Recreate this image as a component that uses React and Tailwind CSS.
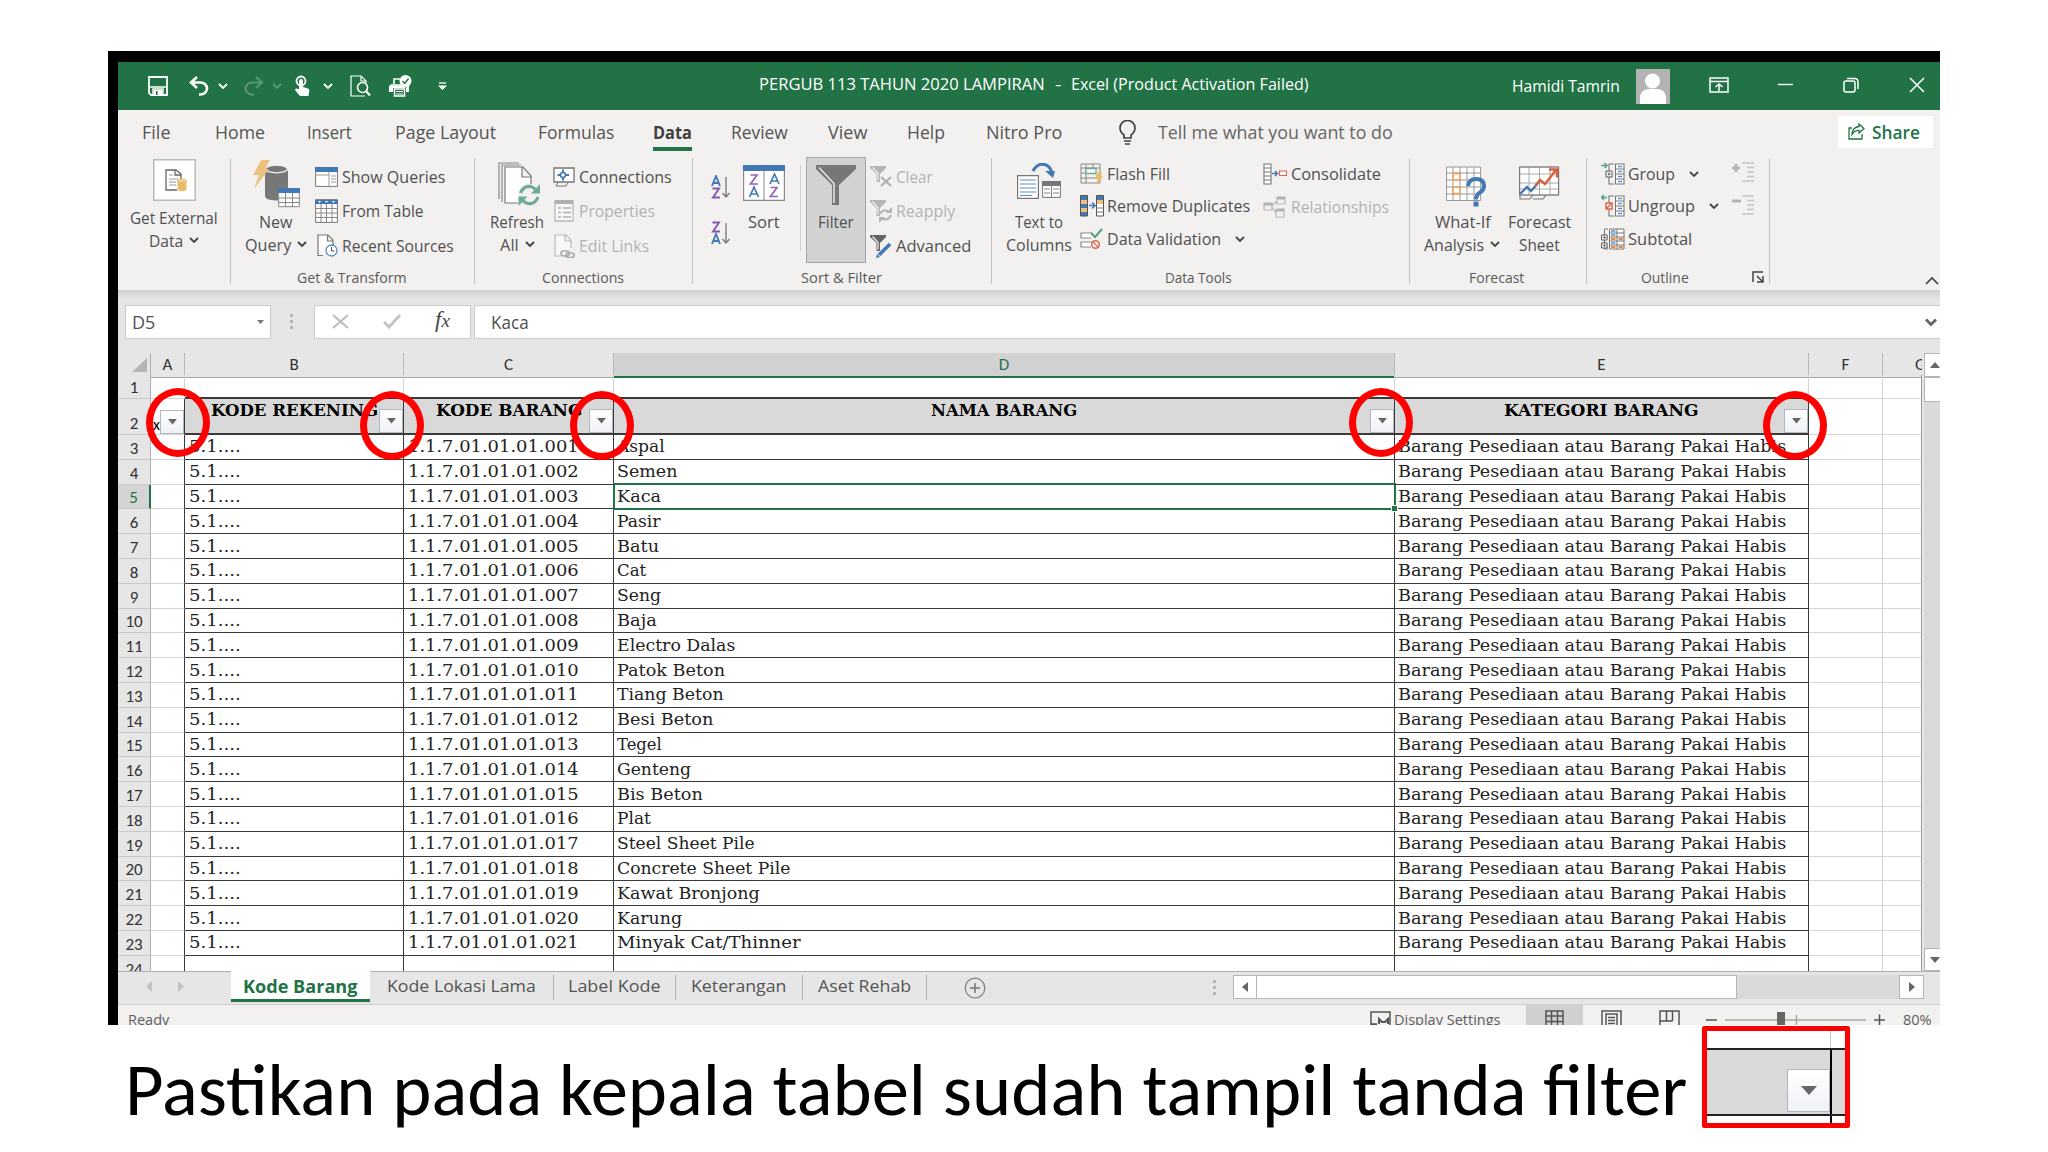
import { useLayoutEffect, useRef, useState } from "react";
import clsx from "clsx";

// Text squeezed or stretched to a fixed width
const Txt = ({ w, className, children }) => {
  const ref = useRef(null);
  const [scale, setScale] = useState(1);

  useLayoutEffect(() => {
    setScale(w / ref.current.offsetWidth);
  }, [w]);

  return (
    <span className={clsx("block shrink-0", className)} style={{ width: w }}>
      <span
        ref={ref}
        className="inline-block origin-left whitespace-nowrap align-top"
        style={{ transform: `scaleX(${scale})` }}
      >
        {children}
      </span>
    </span>
  );
};

const Svg = ({ w, h, className, children }) => (
  <svg
    width={w}
    height={h}
    viewBox={`0 0 ${w} ${h}`}
    fill="none"
    className={clsx("block shrink-0", className)}
  >
    {children}
  </svg>
);

const Chevron = ({ className, color = "#444" }) => (
  <Svg w={10} h={8} className={className}>
    <path d="M1 2l4 4 4-4" stroke={color} strokeWidth="1.8" />
  </Svg>
);

const SaveIcon = () => (
  <Svg w={20} h={20} className="ml-[30px]">
    <path d="M1 1h18v18H3l-2-2z" stroke="#fff" strokeWidth="1.8" />
    <path d="M2 11h16M5 19v-6h10v6" stroke="#fff" strokeWidth="1.500" />
    <path d="M6 14h8v5H6z" fill="#fff" />
    <path d="M8 15h1.600v4H8z" fill="#217346" />
  </Svg>
);

const UndoIcon = () => (
  <Svg w={21} h={20} className="ml-[21px]">
    <path d="M8 1L2 6.500l6 5.500M2 6.500h9.500a6.500 6 0 0 1 0 12H10" stroke="#fff" strokeWidth="2.600" />
  </Svg>
);

const RedoIcon = () => (
  <Svg w={21} h={20} className="ml-[15px] opacity-25">
    <path d="M13 1l6 5.500-6 5.500M19 6.500H9.500a7 6 0 0 0 0 12H11" stroke="#fff" strokeWidth="2.200" />
  </Svg>
);

const TouchIcon = () => (
  <Svg w={16} h={22} className="ml-[12px]">
    <circle cx="7" cy="6" r="4.500" stroke="#fff" strokeWidth="1.800" />
    <path d="M5 6a2 2 0 0 1 4 0v6l5 1.500q1.500.5 1.300 2L14.500 21H6l-5-6q0-2 2-1.500l2 1z" fill="#fff" />
  </Svg>
);

const PreviewIcon = () => (
  <Svg w={21} h={22} className="ml-[17px]">
    <path d="M15 21H1V1h10l5 5v2M11 1v5h5" stroke="#fff" strokeWidth="1.200" />
    <circle cx="12.500" cy="12.500" r="5" stroke="#fff" strokeWidth="1.600" />
    <path d="M16 16l4 4.500" stroke="#fff" strokeWidth="2.200" />
  </Svg>
);

const PrintIcon = () => (
  <Svg w={23} h={22} className="ml-[18px]">
    <path d="M5 9V4h6M1.500 10h11.500" stroke="#fff" strokeWidth="1.600" />
    <path d="M0 10.500h20V17h-3v-4H4v4H0z" fill="#fff" />
    <path d="M16 12h2" stroke="#217346" />
    <path d="M5.500 14h10v7h-10z" stroke="#fff" strokeWidth="1.500" />
    <path d="M7 16.500h7M7 19h7" stroke="#fff" />
    <circle cx="16.500" cy="6" r="6" fill="#fff" />
    <path d="M13.500 6l2.300 2.500L19.500 3.500" stroke="#217346" strokeWidth="1.400" />
  </Svg>
);

const TitleBar = () => (
  <div className="flex h-12 shrink-0 items-center bg-[#217346] text-[16.500px] text-white">
    <div className="flex w-[641px] items-center">
      <SaveIcon />
      <UndoIcon />
      <Chevron color="#fff" className="ml-2" />
      <RedoIcon />
      <Chevron color="#5c9a78" className="ml-2" />
      <TouchIcon />
      <Chevron color="#fff" className="ml-[13px]" />
      <PreviewIcon />
      <PrintIcon />
      <Svg w={9} h={8} className="ml-[26px]">
        <path d="M1 1h7" stroke="#fff" strokeWidth="1.300" />
        <path d="M0 3.500h9L4.500 8z" fill="#fff" />
      </Svg>
    </div>
    <Txt w={286} className="-mt-1">PERGUB 113 TAHUN 2020 LAMPIRAN</Txt>
    <Txt w={6} className="-mt-1 ml-[10px]">-</Txt>
    <Txt w={238} className="-mt-1 ml-[10px]">Excel (Product Activation Failed)</Txt>
    <Txt w={108} className="ml-[203px]">Hamidi Tamrin</Txt>
    <Svg w={34} h={35} className="ml-4">
      <path d="M0 0h34v35H0z" fill="#b3b3b3" />
      <circle cx="16.500" cy="12" r="7.500" fill="#fff" />
      <path d="M4 35v-5q0-10 9-10h8q9 0 9 10v5z" fill="#fff" />
    </Svg>
    <Svg w={20} h={16} className="-mt-0.5 ml-[39px]">
      <path d="M1 1h18v14H1zM1 4.500h18M10 14V7M6.500 10L10 7l3.500 3" stroke="#fff" strokeWidth="1.500" />
    </Svg>
    <Svg w={15} h={16} className="-mt-0.5 ml-[49px]">
      <path d="M0 7.500h15" stroke="#fff" strokeWidth="1.400" />
    </Svg>
    <Svg w={16} h={16} className="-mt-0.5 ml-[50px]">
      <rect x="1" y="4" width="11" height="11" rx="2" stroke="#fff" strokeWidth="1.500" />
      <path d="M4 1.500h7.500q3.500 0 3.500 3.500v7" stroke="#fff" strokeWidth="1.500" />
    </Svg>
    <Svg w={16} h={16} className="-mt-0.5 ml-[50px]">
      <path d="M1 1l14 14M15 1L1 15" stroke="#fff" strokeWidth="1.500" />
    </Svg>
  </div>
);

const tabs = [
  { name: "File", w: 29, ml: "ml-6" },
  { name: "Home", w: 50, ml: "ml-[44px]" },
  { name: "Insert", w: 45, ml: "ml-[42px]" },
  { name: "Page Layout", w: 101, ml: "ml-[43px]" },
  { name: "Formulas", w: 76, ml: "ml-[42px]" },
  { name: "Data", w: 39, ml: "ml-[39px]", active: true },
  { name: "Review", w: 57, ml: "ml-[39px]" },
  { name: "View", w: 39, ml: "ml-[40px]" },
  { name: "Help", w: 38, ml: "ml-10" },
  { name: "Nitro Pro", w: 76, ml: "ml-[41px]" },
];

const TabBar = () => (
  <div className="flex h-[45px] items-center text-[18px] text-[#555]">
    {tabs.map((tab) => (
      <div
        key={tab.name}
        className={clsx(
          "flex h-[36px] items-center border-b-4 pt-[3px]",
          tab.ml,
          tab.active ? "border-[#217346] font-bold text-[#3f3f3f]" : "border-transparent"
        )}
      >
        <Txt w={tab.w}>{tab.name}</Txt>
      </div>
    ))}
    <Svg w={17} h={25} className="ml-[57px]">
      <path d="M5 18v-3Q1 12 1 8a7.500 7.500 0 0 1 15 0q0 4-4 7v3zM5 21h7" stroke="#444" strokeWidth="1.700" />
      <path d="M6 24h5" stroke="#444" strokeWidth="1.500" />
    </Svg>
    <Txt w={235} className="ml-[22px] text-[#666]">Tell me what you want to do</Txt>
    <div className="-mt-0.5 ml-auto mr-[7px] flex h-8 w-[95px] items-center bg-white pl-[10px]">
      <Svg w={17} h={17}>
        <path d="M4 5H1v11h13v-5M11 1l5 4.500-5 4.500V7.500Q7 7 4 11.500 4.500 4 11 3.500z" stroke="#217346" strokeWidth="1.300" />
      </Svg>
      <Txt w={48} className="ml-[7px] pt-0.5 font-semibold text-[#217346]">Share</Txt>
    </div>
  </div>
);

const Group = ({ label, labelW, width, pad, children }) => (
  <div className={clsx("flex h-[126px] shrink-0 flex-col border-r border-[#c4c3c2]", width)}>
    <div className="flex h-[110px] shrink-0 items-start">{children}</div>
    {label && (
      <div className={clsx("flex h-5 shrink-0 items-center text-[14.500px] text-[#5a5a5a]", pad)}>
        <Txt w={labelW}>{label}</Txt>
      </div>
    )}
  </div>
);

// Row of the ribbon: a small icon with a caption
const Item = ({ icon, w, gap = "ml-1", chevron, disabled, children }) => (
  <div className={clsx("flex h-full items-center", disabled && "text-[#b4b3b2]")}>
    {icon}
    <Txt w={w} className={gap}>{children}</Txt>
    {chevron && <Chevron className={chevron} />}
  </div>
);

const Line = ({ w, chevron, className, children }) => (
  <div className={clsx("flex h-6 items-center", className)}>
    <Txt w={w}>{children}</Txt>
    {chevron && <Chevron className="-mt-0.5 ml-[6px]" />}
  </div>
);

const ExternalDataIcon = () => (
  <Svg w={43} h={42} className="ml-[35px] mt-px">
    <path d="M.8.8h41.400v40.400H.8z" fill="#fff" stroke="#bbb" strokeWidth="1.500" />
    <path d="M28 20v-5l-5-4H13v20h11M22 11v5h6" stroke="#666" strokeWidth="1.300" />
    <path d="M16 16h4M16 20h9M16 23h7M16 26h7" stroke="#999" />
    <path d="M24.500 21.500h9V31q-4.500 2.500-9 0z" fill="#e9bd6c" />
    <ellipse cx="29" cy="22" rx="4.500" ry="1.800" fill="#f2d59c" stroke="#e0ac50" strokeWidth=".8" />
  </Svg>
);

const NewQueryIcon = () => (
  <Svg w={47} h={48} className="ml-[22px] mt-0.5">
    <path d="M12 9v27q0 4 11 4.500h2V28h10V9z" fill="#777" />
    <ellipse cx="23.500" cy="9" rx="11" ry="3.800" fill="#777" stroke="#f2f1f0" strokeWidth="1.200" />
    <path d="M8 0h9l-5 9h4L1 29l5-14H0z" fill="#ecc17d" />
    <path d="M25.700 28.700h20.600v18H25.700z" fill="#fff" stroke="#888" />
    <path d="M25 28h22v5H25z" fill="#4279b5" />
    <path d="M25 38h22M25 42.500h22M32.500 33v14M39.500 33v14" stroke="#888" />
  </Svg>
);

const ShowQueriesIcon = () => (
  <Svg w={23} h={20}>
    <path d="M.6.600h21.800v18.800H.6z" fill="#fff" stroke="#777" />
    <path d="M0 0h23v5H0z" fill="#4279b5" />
    <path d="M0 8h14M14 5v14M16 9h5M16 12h5M16 15h5" stroke="#999" />
  </Svg>
);

const TableIcon = () => (
  <Svg w={23} h={24}>
    <path d="M.6.600h21.800v22.800H.6z" fill="#fff" stroke="#777" />
    <path d="M0 1h23v4H0z" fill="#4279b5" />
    <path d="M0 9.500h23M0 14h23M0 18.500h23M6 5v18M11.500 5v18M17 5v18" stroke="#888" />
    <path d="M3 2l1.500 2L6 2zM10 2l1.500 2L13 2zM17 2l1.500 2L20 2z" fill="#fff" />
  </Svg>
);

const RecentIcon = () => (
  <Svg w={23} h={23}>
    <path d="M8 21.500H3V1h10l5 5v5M12.500 1v6H18" fill="#fff" stroke="#777" strokeWidth="1.200" />
    <circle cx="16.500" cy="16.500" r="5.500" fill="#fff" stroke="#5a8bc4" strokeWidth="1.300" />
    <path d="M16.500 13v4h3" stroke="#555" />
  </Svg>
);

const RefreshIcon = () => (
  <Svg w={43} h={44} className="ml-[23px] mt-1">
    <path d="M1 37V1h20M4 40V3h19" stroke="#888" strokeWidth="1.200" />
    <path d="M20 41H7V5h18l8 9v10M24 5v10h9" fill="#fff" stroke="#777" strokeWidth="1.200" />
    <circle cx="31" cy="33" r="11" fill="#f2f1f0" />
    <path d="M22.500 31q3-7.500 10-6.500 3 .500 6 4M40 35q-3 7.500-10 6.500-3-.500-6-4" stroke="#6fab93" strokeWidth="3.200" />
    <path d="M33 31.500h9V22zM29.500 34.500h-9V44z" fill="#6fab93" />
  </Svg>
);

const ConnectionsIcon = () => (
  <Svg w={22} h={20}>
    <path d="M1 1h20v14H1z" fill="#fff" stroke="#777" strokeWidth="1.300" />
    <path d="M10 2.500v3M10 10v3.500M4.500 8H8M12 8h4" stroke="#4279b5" strokeWidth="2" />
    <circle cx="10" cy="8" r="2.500" stroke="#4279b5" strokeWidth="1.500" />
    <path d="M5 15l-2 4h10l2-4" stroke="#777" />
  </Svg>
);

const PropertiesIcon = () => (
  <Svg w={22} h={22}>
    <path d="M2 1h18v20H2z" fill="#f7f7f6" stroke="#bbb" strokeWidth="1.300" />
    <path d="M2 0h18v4H2z" fill="#b0b0b0" />
    <path d="M5 8h3M10 8h8M5 12.500h3M10 12.500h8M5 17h3M10 17h8" stroke="#b0b0b0" strokeWidth="1.500" />
  </Svg>
);

const EditLinksIcon = () => (
  <Svg w={22} h={24}>
    <path d="M8 22H2V1h11l5 5v8M12 1v6h6" fill="#f7f7f6" stroke="#bbb" strokeWidth="1.200" />
    <rect x="8" y="17" width="8" height="5" rx="2.500" stroke="#aaa" strokeWidth="1.700" />
    <rect x="13" y="19" width="8" height="4.500" rx="2.200" stroke="#aaa" strokeWidth="1.700" />
  </Svg>
);

const SortSmall = ({ flip, className }) => (
  <Svg w={20} h={24} className={className}>
    <g transform={flip ? "translate(0 12)" : ""}>
      <path d="M1 11L5 1l4 10M2.500 8h5" stroke="#4279b5" strokeWidth="1.900" />
    </g>
    <g transform={flip ? "translate(0 -12)" : ""}>
      <path d="M1.500 13.500h6.500l-6 9h7" stroke="#8a55ad" strokeWidth="1.900" />
    </g>
    <path d="M15 2v20M11.500 18l3.500 4 3.500-4" stroke="#777" strokeWidth="1.300" />
  </Svg>
);

const SortIcon = () => (
  <Svg w={42} h={36}>
    <path d="M.6.600h40.800v34.800H.6z" fill="#fff" stroke="#888" strokeWidth="1.200" />
    <path d="M0 0h42v6H0z" fill="#4279b5" />
    <path d="M21 6v29" stroke="#888" />
    <path d="M7.500 10H14l-6.500 9H15M27.500 22.500H34l-6.500 9H35" stroke="#9a62bf" strokeWidth="1.700" />
    <path d="M6.500 32L11 22l4.500 10M8 29h6M27 19l4.500-10L36 19M28.500 16h6" stroke="#4279b5" strokeWidth="1.700" />
  </Svg>
);

const FunnelSmall = ({ color, children }) => (
  <Svg w={22} h={24}>
    <path d="M0 1h16v2l-6 6v8H6.500V9L0 3z" fill={color} />
    <path d="M2.500 2.500l5.500 6v7" stroke="#f2f1f0" strokeWidth="1.200" />
    {children}
  </Svg>
);

const TextColumnsIcon = () => (
  <Svg w={44} h={36} className="ml-[25px] mt-[5px]">
    <path d="M.6 12.600h20.800v22.800H.6z" fill="#fff" stroke="#777" strokeWidth="1.200" />
    <path d="M3 17h16M3 21h16M3 25h16M3 29h16M3 32.500h12" stroke="#5b8fc9" strokeWidth="1.200" />
    <path d="M16 8q5-9 13-6 5 2 6 9" stroke="#4279b5" strokeWidth="3" />
    <path d="M28 8h10l-2 7z" fill="#4279b5" />
    <path d="M25.600 18.600h17.800v15.800H25.600z" fill="#fff" stroke="#777" />
    <path d="M25 18h19v5H25z" fill="#777" />
    <path d="M34.500 23v11M27 26h6M36 26h6M27 30h6M36 30h6" stroke="#888" />
  </Svg>
);

const FlashFillIcon = () => (
  <Svg w={23} h={22}>
    <path d="M1 1h19v19H1zM6 1v19M13 1v4M1 5h19M1 10h5M1 15h18" stroke="#888" />
    <path d="M6 5.500h10v5H6z" fill="#fff" stroke="#6fab93" strokeWidth="1.300" />
    <path d="M18 9h4l-2 4h3l-7 9 2-7h-3z" fill="#ecbc60" />
  </Svg>
);

const DuplicatesIcon = () => (
  <Svg w={24} h={22}>
    <path d="M.5.500h7v20.500h-7z" fill="#4279b5" stroke="#555" />
    <path d="M1 5h6v4H1zM1 13h6v4H1z" fill="#ecc17d" />
    <path d="M9 10.500h5M12 7.500l3 3-3 3" stroke="#4279b5" strokeWidth="1.600" />
    <path d="M16.500.500h7v20.500h-7z" fill="#fff" stroke="#555" />
    <path d="M17 1h6v4h-6z" fill="#4279b5" />
    <path d="M17 5h6v4h-6z" fill="#ecc17d" />
    <path d="M16 13h8M16 17h8" stroke="#777" />
  </Svg>
);

const ValidationIcon = () => (
  <Svg w={23} h={22}>
    <path d="M11 10H1V5h11M11 19H1v-5h11" fill="#fff" stroke="#888" strokeWidth="1.200" />
    <path d="M11 5l4 4 7-8" stroke="#58a284" strokeWidth="2.200" />
    <circle cx="15.500" cy="16.500" r="3.800" fill="#fff" stroke="#e0654a" strokeWidth="1.500" />
    <path d="M13 14l5 5" stroke="#e0654a" strokeWidth="1.300" />
  </Svg>
);

const ConsolidateIcon = () => (
  <Svg w={24} h={22}>
    <path d="M1 1h7v20H1zM1 5h7M1 9h7M1 13h7M1 17h7" fill="#fff" stroke="#777" strokeWidth="1.100" />
    <path d="M9 10.500h5M12 8l2.500 2.500L12 13" stroke="#4279b5" strokeWidth="1.500" />
    <path d="M16.500 8h7v4.500h-7z" fill="#fff" stroke="#e0654a" strokeWidth="1.200" />
  </Svg>
);

const RelationsIcon = () => (
  <Svg w={24} h={22}>
    <path d="M1 7h8v7H1zM14 1h8v7h-8zM13 13h8v8h-8zM9 10l5-5M9 11l4 6" stroke="#b8b8b8" strokeWidth="1.200" />
    <path d="M1 7h8v2.500H1zM14 1h8v2.500h-8zM13 13h8v2.500h-8z" fill="#b0b0b0" />
  </Svg>
);

const WhatIfIcon = () => (
  <Svg w={41} h={41}>
    <path d="M.6 1h34v33.500H.6zM7 1v33.500M14 1v33.500M21 1v33.500M28 1v33.500M0 7h34M0 14h34M0 21h34M0 28h34" fill="#fff" stroke="#999" />
    <path d="M7 7.500h7V14H7zM7 21h7v6.500H7z" fill="#fff" stroke="#ef9a52" strokeWidth="1.500" />
    <path d="M22 20q1-7 8-7 8 0 8 7 0 4-4 6.500-4 2.500-4 7" stroke="#4279b5" strokeWidth="4" />
    <path d="M27.500 35.500h5v5h-5z" fill="#4279b5" />
  </Svg>
);

const ForecastIcon = () => (
  <Svg w={41} h={36}>
    <path d="M.6 1h39v28H.6zM10 1v28M20.500 1v28M31 1v28M0 8h39M0 17h39M0 23h39" fill="#fff" stroke="#aaa" />
    <path d="M.6 1h39v28H.6zM1 29v4h10l3-4M14 33h10l3-4" stroke="#777" strokeWidth="1.100" />
    <path d="M1 28l7-7 4 4 8-9" stroke="#4279b5" strokeWidth="2.400" />
    <path d="M16 20l5-6 5 4L37 4M30 3.500h8v8" stroke="#d9603f" strokeWidth="2.400" />
  </Svg>
);

const OutlineIcon = ({ kind }) => (
  <Svg w={24} h={22}>
    {kind !== "subtotal" && (
      <>
        <path d="M13 1H8v20h5" stroke="#777" strokeWidth="1.100" />
        <path d="M14.500 1H23v20h-8.500zM14 6h9M14 11h9M14 16h9" fill="#fff" stroke="#777" strokeWidth="1.100" />
        <path d="M17 3.500h4M17 8.500h4M17 13.500h4M17 18.500h4" stroke="#5b8fc9" strokeWidth="1.600" />
      </>
    )}
    {kind === "group" && (
      <>
        <path d="M0 2.500h5M3.500 0L6 2.500 3.500 5" stroke="#58a284" strokeWidth="1.600" />
        <path d="M5 8h6v6H5z" fill="#fff" stroke="#555" />
        <path d="M8 9.500v3M6.500 11h3" stroke="#555" />
      </>
    )}
    {kind === "ungroup" && (
      <>
        <path d="M6 2.500H1M3 0L.6 2.500 3 5" stroke="#58a284" strokeWidth="1.600" />
        <path d="M5 8h6v6H5zM5 14l6-6" fill="#fff" stroke="#e0654a" strokeWidth="1.500" />
      </>
    )}
    {kind === "subtotal" && (
      <>
        <path d="M7 1H3.500v20H7" stroke="#777" />
        <path d="M8.500 1H23v20H8.500zM16 1v20M8 5h15M8 9h15M8 13h15M8 17h15" fill="#fff" stroke="#777" />
        <path d="M10 3h4.500M10 7h4.500M10 15h4.500" stroke="#5b8fc9" strokeWidth="1.700" />
        <path d="M10 11h4.500M10 19h4.500M17.500 11H22M17.500 19H22" stroke="#ef8a42" strokeWidth="2" />
        <path d="M.6 7h5.500v5H.6zM.6 15h5.500v5H.6z" fill="#fff" stroke="#555" />
        <path d="M2 9.500h3M3.400 8v3M2 17.500h3M3.400 16v3" stroke="#555" strokeWidth=".8" />
      </>
    )}
  </Svg>
);

const DetailIcon = ({ plus, className }) => (
  <Svg w={22} h={20} className={className}>
    <path d={plus ? "M0 6h8M4 2v8" : "M0 6h9"} stroke="#b5b4b3" strokeWidth="3" />
    <path d="M10 1h12M15 5.500h7M15 10h7M15 14.500h7M10 19h12" stroke="#c4c3c2" strokeWidth="1.500" />
  </Svg>
);

const Ribbon = () => (
  <div className="mt-[3px] flex text-[16.500px] leading-6 text-[#505050]">
    <Group width="w-[113px]">
      <div>
        <ExternalDataIcon />
        <Line w={88} className="ml-3 mt-[5px]">Get External</Line>
        <Line w={34} chevron className="-mt-px ml-[31px]">Data</Line>
      </div>
    </Group>
    <Group label="Get & Transform" labelW={110} pad="pl-[66px]" width="w-[244px]">
      <div className="w-[84px]">
        <NewQueryIcon />
        <Line w={33} className="ml-[28px] mt-0.5">New</Line>
        <Line w={46} chevron className="-mt-px ml-[14px]">Query</Line>
      </div>
      <div className="mt-0.5 flex h-[103px] flex-col">
        <Item icon={<ShowQueriesIcon />} w={103}>Show Queries</Item>
        <Item icon={<TableIcon />} w={82}>From Table</Item>
        <Item icon={<RecentIcon />} w={112}>Recent Sources</Item>
      </div>
    </Group>
    <Group label="Connections" labelW={82} pad="pl-[67px]" width="w-[218px]">
      <div className="w-[78px]">
        <RefreshIcon />
        <Line w={54} className="ml-[15px] mt-1">Refresh</Line>
        <Line w={19} chevron className="-mt-px ml-[25px]">All</Line>
      </div>
      <div className="mt-0.5 flex h-[103px] flex-col">
        <Item icon={<ConnectionsIcon />} w={93}>Connections</Item>
        <Item icon={<PropertiesIcon />} w={76} disabled>Properties</Item>
        <Item icon={<EditLinksIcon />} w={70} disabled>Edit Links</Item>
      </div>
    </Group>
    <Group label="Sort & Filter" labelW={81} pad="pl-[108px]" width="w-[299px]">
      <div className="w-[50px]">
        <SortSmall className="ml-[18px] mt-[17px]" />
        <SortSmall flip className="ml-[18px] mt-[22px]" />
      </div>
      <div className="mt-[7px] h-[86px] w-[58px] border-r border-[#d0cfce]">
        <SortIcon />
        <Line w={32} className="ml-[5px] mt-[9px]">Sort</Line>
      </div>
      <div className="-mt-px ml-[5px] h-[106px] w-[60px] border border-[#a3a3a3] bg-[#d2d2d2]">
        <Svg w={40} h={40} className="ml-[9px] mt-[7px]">
          <path d="M0 0h40v4L23 20v20h-7V20L0 4z" fill="#777" />
          <path d="M3 2.500l15 16V38" stroke="#e8e8e8" strokeWidth="1.500" />
        </Svg>
        <Line w={36} className="ml-[11px] mt-[5px]">Filter</Line>
      </div>
      <div className="ml-1 mt-0.5 flex h-[103px] flex-col">
        <Item
          icon={
            <FunnelSmall color="#b5b5b5">
              <path d="M11 12l10 9M21 12l-10 9" stroke="#b0b0b0" strokeWidth="2.200" />
            </FunnelSmall>
          }
          w={37}
          disabled
        >
          Clear
        </Item>
        <Item
          icon={
            <FunnelSmall color="#b5b5b5">
              <path d="M10 15q3-6 9-2M21 16q-3 7-10 3" stroke="#b5b5b5" strokeWidth="2.200" />
              <path d="M16 14h6V8zM15 18H9v6z" fill="#b5b5b5" />
            </FunnelSmall>
          }
          w={59}
          disabled
        >
          Reapply
        </Item>
        <Item
          icon={
            <FunnelSmall color="#666">
              <path d="M9 21L20 10" stroke="#4279b5" strokeWidth="3.600" />
              <path d="M6 24l1-4 3 3z" fill="#4279b5" />
            </FunnelSmall>
          }
          w={75}
        >
          Advanced
        </Item>
      </div>
    </Group>
    <Group label="Data Tools" labelW={67} pad="pl-[173px]" width="w-[418px]">
      <div className="w-[88px]">
        <TextColumnsIcon />
        <Line w={48} className="ml-[23px] mt-[11px]">Text to</Line>
        <Line w={66} className="-mt-px ml-[14px]">Columns</Line>
      </div>
      <div className="flex h-[97px] w-[183px] flex-col">
        <Item icon={<FlashFillIcon />} w={63}>Flash Fill</Item>
        <Item icon={<DuplicatesIcon />} w={143} gap="ml-[3px]">Remove Duplicates</Item>
        <Item icon={<ValidationIcon />} w={114} chevron="ml-[14px]">Data Validation</Item>
      </div>
      <div className="flex h-[65px] flex-col">
        <Item icon={<ConsolidateIcon />} w={90}>Consolidate</Item>
        <Item icon={<RelationsIcon />} w={98} disabled>Relationships</Item>
      </div>
    </Group>
    <Group label="Forecast" labelW={55} pad="pl-[59px]" width="w-[177px]">
      <div className="mt-2 flex w-[98px] flex-col pl-[14px]">
        <div className="pl-[22px]"><WhatIfIcon /></div>
        <Line w={56} className="ml-[11px] mt-[3px]">What-If</Line>
        <Line w={60} chevron className="-mt-px">Analysis</Line>
      </div>
      <div className="mt-2">
        <div className="h-[41px] pl-[11px]"><ForecastIcon /></div>
        <Line w={63} className="mt-[3px]">Forecast</Line>
        <Line w={41} className="-mt-px ml-[11px]">Sheet</Line>
      </div>
    </Group>
    <div className="flex h-[126px] w-[183px] flex-col border-r border-[#c4c3c2] pl-[14px]">
      <div className="flex h-[110px] shrink-0">
        <div className="flex h-[97px] w-[131px] flex-col">
          <Item icon={<OutlineIcon kind="group" />} w={47} gap="ml-[3px]" chevron="ml-[14px]">Group</Item>
          <Item icon={<OutlineIcon kind="ungroup" />} w={67} gap="ml-[3px]" chevron="ml-[14px]">Ungroup</Item>
          <Item icon={<OutlineIcon kind="subtotal" />} w={64} gap="ml-[3px]">Subtotal</Item>
        </div>
        <div>
          <DetailIcon plus className="mt-1" />
          <DetailIcon className="mt-[13px]" />
        </div>
      </div>
      <div className="flex h-5 shrink-0 items-center pl-10 text-[14.500px] text-[#5a5a5a]">
        <Txt w={48}>Outline</Txt>
        <Svg w={12} h={12} className="-mt-0.5 ml-[63px]">
          <path d="M1 11V1h10M5 5l6 6M11 5v6H5" stroke="#444" strokeWidth="1.500" />
        </Svg>
      </div>
    </div>
    <Svg w={14} h={9} className="ml-auto mr-px mt-[118px]">
      <path d="M1 8l6-6 6 6" stroke="#444" strokeWidth="1.700" />
    </Svg>
  </div>
);

const Dots = ({ className }) => (
  <Svg w={3} h={15} className={className}>
    <path d="M0 0h3v3H0zM0 6h3v3H0zM0 12h3v3H0z" fill="#b5b5b5" />
  </Svg>
);

const FormulaBar = () => (
  <div className="flex h-[63px] shrink-0 bg-linear-to-b from-[#cfcfcf] to-[#e6e6e6] to-15% pl-[7px] pt-[15px] text-[18px] text-[#505050]">
    <div className="flex h-[34px] w-[146px] items-center justify-between border border-[#cbcbcb] bg-white pl-[6px] pr-[6px]">
      <Txt w={23}>D5</Txt>
      <Svg w={7} h={5}><path d="M0 0h7L3.500 4z" fill="#777" /></Svg>
    </div>
    <Dots className="ml-[19px] mt-[9px]" />
    <div className="ml-[21px] flex h-[34px] w-[157px] items-center border border-[#cbcbcb] bg-white">
      <Svg w={17} h={15} className="-mt-0.5 ml-[17px]">
        <path d="M1 1l15 13M16 1L1 14" stroke="#bdbdbd" strokeWidth="2.200" />
      </Svg>
      <Svg w={18} h={15} className="-mt-0.5 ml-[34px]">
        <path d="M1 8l5 5L17 1" stroke="#c4c4c4" strokeWidth="3" />
      </Svg>
      <span className="-mt-1 ml-[34px] font-['Liberation_Serif',serif] text-[23px] italic text-[#444]">
        f<span className="text-[19px]">x</span>
      </span>
    </div>
    <div className="ml-[3px] flex h-[34px] flex-1 items-center justify-between border-y border-l border-[#cbcbcb] bg-white pl-4 pr-[3px]">
      <Txt w={38}>Kaca</Txt>
      <Svg w={12} h={9}><path d="M1 1.500l5 5 5-5" stroke="#666" strokeWidth="2.800" /></Svg>
    </div>
  </div>
);

const names = [
  ["Aspal", 48],
  ["Semen", 60],
  ["Kaca", 44],
  ["Pasir", 44],
  ["Batu", 42],
  ["Cat", 29],
  ["Seng", 44],
  ["Baja", 40],
  ["Electro Dalas", 118],
  ["Patok Beton", 108],
  ["Tiang Beton", 107],
  ["Besi Beton", 96],
  ["Tegel", 45],
  ["Genteng", 74],
  ["Bis Beton", 86],
  ["Plat", 34],
  ["Steel Sheet Pile", 138],
  ["Concrete Sheet Pile", 173],
  ["Kawat Bronjong", 143],
  ["Karung", 65],
  ["Minyak Cat/Thinner", 184],
];

const cols = "grid grid-cols-[33px_34px_219px_210px_781px_414px_74px_39px]";

const FilterButton = () => (
  <span className="absolute bottom-0 right-0 flex h-6 w-6 items-center justify-center border border-[#b4b8bd] bg-linear-to-b from-white to-[#eef1f6]">
    <Svg w={9} h={6}><path d="M0 0h9L4.500 5.500z" fill="#666" /></Svg>
  </span>
);

const RowNumber = ({ n, active }) => (
  <div
    className={clsx(
      "flex items-end justify-center overflow-hidden border-b border-[#c8c8c8] font-['Carlito','Lato',sans-serif] text-[17px] leading-[21px]",
      active
        ? "border-r-2 border-r-[#217346] bg-[#d4d4d4] text-[#217346]"
        : "border-r border-r-[#b0b0b0] bg-[#e6e6e6] text-[#333]"
    )}
  >
    {n}
  </div>
);

const HeadCell = ({ w, children }) => (
  <div className="relative flex justify-center border-b-2 border-r border-[#3a3a3a] bg-[#d9d9d9] pt-px font-['DejaVu_Serif',serif] text-[16.500px] font-bold leading-[22px] text-black">
    <Txt w={w}>{children}</Txt>
    <FilterButton />
  </div>
);

const Cell = ({ w, pad, children }) => (
  <div className={clsx("flex items-center border-b-[1.500px] border-r-[1.500px] border-[#3a3a3a] pt-px", pad)}>
    <Txt w={w}>{children}</Txt>
  </div>
);

const Circle = ({ className }) => (
  <span className={clsx("absolute z-10 h-[69px] w-[64px] rounded-[50%] border-[7px] border-[#fe0000]", className)} />
);

const Sheet = () => (
  <div className="relative h-[618px] w-[1804px] overflow-hidden bg-white">
    <div className={clsx(cols, "h-[22px] text-center font-['Carlito','Lato',sans-serif] text-[17px] leading-[23px] text-[#333]")}>
      <div className="flex justify-end border-b border-r border-[#b0b0b0] bg-[#e6e6e6] pr-[3px] pt-[5px]">
        <Svg w={15} h={14}><path d="M15 0v14H0z" fill="#b5b5b5" /></Svg>
      </div>
      {["A", "B", "C", "D", "E", "F"].map((c) => (
        <div
          key={c}
          className={clsx(
            "border-r border-r-[#b8b8b8]",
            c === "D"
              ? "border-b-2 border-b-[#217346] bg-[#d2d2d2] text-[#217346]"
              : "border-b border-b-[#a6a6a6] bg-[#e6e6e6]"
          )}
        >
          {c}
        </div>
      ))}
      <div className="overflow-hidden border-b border-[#a6a6a6] bg-[#e6e6e6] pl-8 text-left">G</div>
    </div>
    <div className={clsx(cols, "h-[24px]")}>
      <RowNumber n={1} />
      <div className="border-b border-r border-[#d4d4d4]" />
      {["B", "C", "D", "E"].map((c) => (
        <div key={c} className="border-b-2 border-r border-b-[#3a3a3a] border-r-[#d4d4d4]" />
      ))}
      <div className="border-b border-r border-[#d4d4d4]" />
      <div className="border-b border-r border-[#d4d4d4] border-r-[#999]" />
    </div>
    <div className={clsx(cols, "h-9")}>
      <RowNumber n={2} />
      <div className="relative flex items-end border-b border-r border-b-[#d4d4d4] border-r-[#3a3a3a] pl-0.5 font-['Carlito','Lato',sans-serif] text-[16px] leading-[19px] text-black">
        x
        <FilterButton />
      </div>
      <HeadCell w={167}>KODE REKENING</HeadCell>
      <HeadCell w={146}>KODE BARANG</HeadCell>
      <HeadCell w={146}>NAMA BARANG</HeadCell>
      <HeadCell w={195}>KATEGORI BARANG</HeadCell>
      <div className="border-b border-r border-[#d4d4d4]" />
      <div className="border-b border-r border-[#d4d4d4] border-r-[#999]" />
    </div>
    {names.map(([name, w], i) => (
      <div
        key={name}
        className={clsx(cols, "h-[24.800px] font-['DejaVu_Serif',serif] text-[16px] leading-[22px] text-[#222]")}
      >
        <RowNumber n={i + 3} active={i === 2} />
        <div className="border-b border-r border-b-[#d4d4d4] border-r-[#3a3a3a]" />
        <Cell w={52} pad="pl-[3.500px]">5.1....</Cell>
        <Cell w={171} pad="pl-1">{`1.1.7.01.01.01.0${String(i + 1).padStart(2, "0")}`}</Cell>
        <Cell w={w} pad="pl-[3px]">{name}</Cell>
        <Cell w={388} pad="pl-[3px]">Barang Pesediaan atau Barang Pakai Habis</Cell>
        <div className="border-b border-r border-[#d4d4d4]" />
        <div className="border-b border-r border-[#d4d4d4] border-r-[#999]" />
      </div>
    ))}
    <div className={clsx(cols, "h-[24.800px]")}>
      <RowNumber n={24} />
      <div className="border-r border-[#3a3a3a]" />
      {["B", "C", "D", "E"].map((c) => (
        <div key={c} className="border-r-[1.500px] border-[#3a3a3a]" />
      ))}
      <div className="border-r border-[#d4d4d4]" />
      <div className="border-r border-[#999]" />
    </div>
    {/* selected cell */}
    <span className="absolute left-[495px] top-[130px] h-[27px] w-[783px] border-2 border-[#217346]" />
    <span className="absolute left-[1273px] top-[152px] h-[7px] w-[7px] border border-white bg-[#217346]" />
    <Circle className="left-[28px] top-[35px]" />
    <Circle className="left-[242px] top-[38px]" />
    <Circle className="left-[452px] top-[38px]" />
    <Circle className="left-[1231px] top-[35px]" />
    <Circle className="left-[1645px] top-[38px]" />
  </div>
);

const VerticalScroll = () => (
  <div className="flex w-[18px] flex-col overflow-hidden bg-[#e6e6e6] pl-0.5">
    <div className="flex h-6 items-center justify-end border border-r-0 border-[#b5b5b5] bg-white">
      <Svg w={10} h={6}><path d="M0 6l5-6 5 6z" fill="#666" /></Svg>
    </div>
    <div className="flex-1 bg-[#dadada]">
      <div className="h-[25px] border border-r-0 border-[#b5b5b5] bg-white" />
    </div>
    <div className="flex h-[23px] items-center justify-end border border-r-0 border-[#b5b5b5] bg-white">
      <Svg w={10} h={6}><path d="M0 0h10L5 6z" fill="#666" /></Svg>
    </div>
  </div>
);

const SheetTab = ({ w, className, children }) => (
  <div className={clsx("flex h-[25px] items-center border-r border-[#b0b0b0]", className)}>
    <Txt w={w}>{children}</Txt>
  </div>
);

const SheetTabs = () => (
  <div className="flex h-[34px] shrink-0 border-b border-t border-b-[#cfcfcf] border-t-[#b0b0b0] bg-[#e6e6e6] text-[17px] text-[#555]">
    <div className="flex w-[113px] items-center gap-[26px] pb-1 pl-7">
      <Svg w={6} h={11}><path d="M6 0v11L0 5.500z" fill="#c2c2c2" /></Svg>
      <Svg w={6} h={11}><path d="M0 0v11l6-5.500z" fill="#c2c2c2" /></Svg>
    </div>
    <div className="-mt-px flex h-[31px] w-[139px] justify-center border-b-[3px] border-[#217346] bg-white font-bold text-[#217346]">
      <Txt w={115} className="mt-[3px]">Kode Barang</Txt>
    </div>
    <div className="mt-[3px] flex h-[25px]">
      <SheetTab w={149} className="w-[184px] pb-1 pl-[17px]">Kode Lokasi Lama</SheetTab>
      <SheetTab w={93} className="w-[122px] pb-1 pl-[14px]">Label Kode</SheetTab>
      <SheetTab w={95} className="w-[127px] pb-1 pl-[15px]">Keterangan</SheetTab>
      <SheetTab w={93} className="w-[124px] pb-1 pl-[15px]">Aset Rehab</SheetTab>
    </div>
    <Svg w={22} h={22} className="ml-[37px] mt-[5px]">
      <circle cx="11" cy="11" r="9.800" stroke="#888" strokeWidth="1.300" />
      <path d="M11 6v10M6 11h10" stroke="#777" strokeWidth="1.500" />
    </Svg>
    <Dots className="ml-auto mr-[17px] mt-2" />
    <div className="mr-4 mt-[3px] flex h-6 w-[691px] bg-[#dadada]">
      <div className="flex w-[24px] items-center justify-center border border-[#b5b5b5] bg-white">
        <Svg w={6} h={10}><path d="M6 0v10L0 5z" fill="#666" /></Svg>
      </div>
      <div className="w-[480px] border border-l-0 border-[#b5b5b5] bg-white" />
      <div className="ml-auto flex w-[25px] items-center justify-center border border-[#b5b5b5] bg-white">
        <Svg w={6} h={10}><path d="M0 0v10l6-5z" fill="#666" /></Svg>
      </div>
    </div>
  </div>
);

const StatusBar = () => (
  <div className="flex h-5 overflow-hidden bg-[#f2f1f0] text-[14.500px] leading-[20px] text-[#606060]">
    <Txt w={41} className="ml-[10px] mt-[5px]">Ready</Txt>
    <Svg w={21} h={15} className="ml-[1201px] mt-[6px]">
      <path d="M7 14H1V1h19v13M1 13h6" stroke="#555" strokeWidth="1.500" />
      <path d="M9 13V8l3 3h3l3-3v5" stroke="#555" strokeWidth="2" />
    </Svg>
    <Txt w={106} className="ml-[3px] mt-[5px]">Display Settings</Txt>
    <div className="ml-[26px] flex w-[57px] justify-center bg-[#d0d0d0] pt-[5px]">
      <Svg w={19} h={15}>
        <path d="M1 1h17v17H1zM6.500 1v14M12.500 1v14M1 6h17M1 11.500h17" stroke="#555" strokeWidth="1.500" />
      </Svg>
    </div>
    <Svg w={21} h={15} className="ml-[18px] mt-[5px]">
      <path d="M1 15V1h19v14M5 15V4h11v11M7 7.500h7M7 10.500h7M7 13.500h7" stroke="#555" strokeWidth="1.500" />
    </Svg>
    <Svg w={21} h={15} className="ml-[37px] mt-[5px]">
      <path d="M1 15V1h19v14M7.500 1v10M13.500 1v10M1 11h12.500" stroke="#555" strokeWidth="1.500" />
    </Svg>
    <Svg w={186} h={19} className="ml-[26px] mt-px">
      <path d="M0 14h11M168 14h11M173.500 8.500v11" stroke="#555" strokeWidth="1.500" />
      <path d="M19 14h141M90.500 9v10" stroke="#a6a6a6" strokeWidth="1.500" />
      <path d="M71 6h8v13h-8z" fill="#666" />
    </Svg>
    <Txt w={29} className="ml-[11px] mt-[5px]">80%</Txt>
  </div>
);

const Caption = () => (
  <div className="flex h-[127px] pl-[125px] text-black">
    <Txt w={1562} className="mt-[20px] font-['Carlito','Lato',sans-serif] text-[74px] leading-[90px]">
      Pastikan pada kepala tabel sudah tampil tanda filter
    </Txt>
    <div className="ml-[15px] mt-px h-[102px] w-[148px] rounded-xs border-[5px] border-[#fe0000] bg-white">
      <div className="ml-[123px] h-[17px] w-px bg-[#c8c8c8]" />
      <div className="flex h-[68px] border-y-2 border-[#222] bg-[#d9d9d9]">
        <div className="flex w-[125px] items-end justify-end border-r-2 border-black pb-0.5">
          <div className="flex h-[43px] w-[43px] items-center justify-center border border-[#b4b8bd] bg-linear-to-b from-white to-[#eef1f6]">
            <Svg w={16} h={10}><path d="M0 0h16L8 9z" fill="#666" /></Svg>
          </div>
        </div>
      </div>
      <div className="ml-[123px] h-[7px] w-0.5 bg-black" />
    </div>
  </div>
);

const App = () => {
  return (
    <div className="h-[1152px] w-[2048px] overflow-hidden bg-white pt-[51px] font-['Open_Sans','Noto_Sans',sans-serif]">
      <div className="ml-[108px] flex h-[974px] w-[1832px] flex-col overflow-hidden bg-black pl-[10px] pt-[11px]">
        <TitleBar />
        <div className="h-[180px] shrink-0 bg-[#f2f1f0]">
          <TabBar />
          <Ribbon />
        </div>
        <FormulaBar />
        <div className="flex h-[618px] shrink-0">
          <Sheet />
          <VerticalScroll />
        </div>
        <SheetTabs />
        <StatusBar />
      </div>
      <Caption />
    </div>
  );
};

export default App;
